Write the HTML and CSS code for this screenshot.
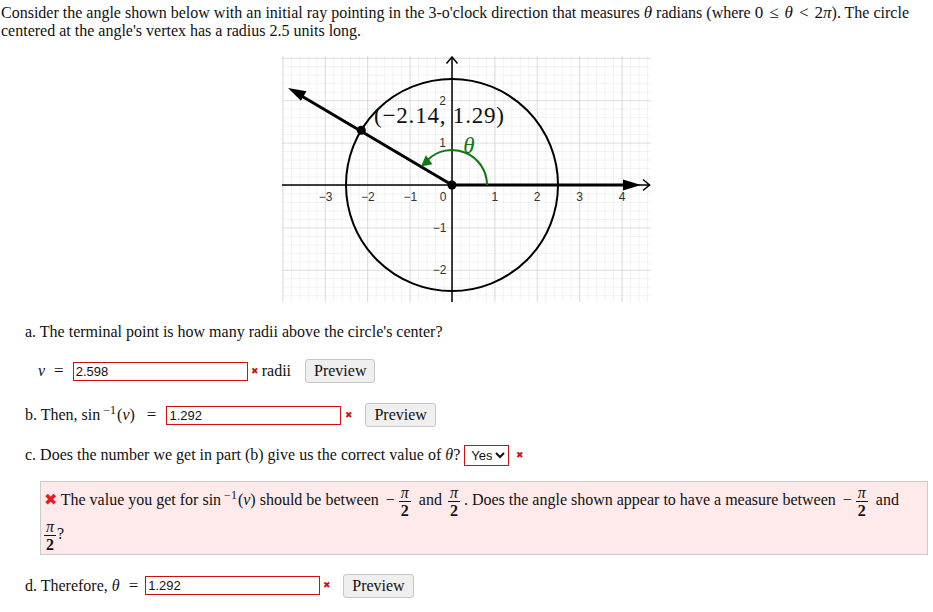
FILE: index.html
```html
<!DOCTYPE html>
<html>
<head>
<meta charset="utf-8">
<link rel="stylesheet" href="styles.css">
</head>
<body>
<p class="intro">Consider the angle shown below with an initial ray pointing in the 3-o'clock direction that measures <span class="m"><span class="mi">θ</span></span> radians (where <span class="m">0<span class="rel">≤</span><span class="mi">θ</span><span class="rel">&lt;</span>2<span class="mi">π</span></span>). The circle centered at the angle's vertex has a radius 2.5 units long.</p>

<div class="graph">
<svg width="369" height="246" viewBox="0 0 369 246" xmlns="http://www.w3.org/2000/svg">
  <defs>
    <pattern id="minor" patternUnits="userSpaceOnUse" x="170" y="129" width="8.48" height="8.48">
      <path d="M0 0 H8.48 M0 0 V8.48" stroke="#e6e6e6" stroke-width="1" fill="none"/>
    </pattern>
    <pattern id="major" patternUnits="userSpaceOnUse" x="170" y="129" width="42.4" height="42.4">
      <path d="M0 0 H42.4 M0 0 V42.4" stroke="#cccccc" stroke-width="1.2" fill="none"/>
    </pattern>
  </defs>
  <rect x="0" y="0" width="369" height="246" fill="#fff"/>
  <rect x="0" y="0" width="369" height="246" fill="url(#minor)"/>
  <rect x="0" y="0" width="369" height="246" fill="url(#major)"/>
  <!-- axes -->
  <line x1="0" y1="129" x2="368" y2="129" stroke="#000" stroke-width="1.5"/>
  <path d="M361 123.5 L367.5 129 L361 134.5" stroke="#000" stroke-width="1.5" fill="none"/>
  <line x1="170" y1="246" x2="170" y2="1" stroke="#000" stroke-width="1.5"/>
  <path d="M164.5 7.5 L170 1 L175.5 7.5" stroke="#000" stroke-width="1.5" fill="none"/>
  <!-- tick labels -->
  <g font-family="Liberation Sans, Arial, sans-serif" font-size="12" fill="#333">
    <text x="43.5" y="144.5" text-anchor="middle">−3</text>
    <text x="85.9" y="144.5" text-anchor="middle">−2</text>
    <text x="128.3" y="144.5" text-anchor="middle">−1</text>
    <text x="161" y="144.5" text-anchor="middle">0</text>
    <text x="212.8" y="144.5" text-anchor="middle">1</text>
    <text x="255.2" y="144.5" text-anchor="middle">2</text>
    <text x="297.6" y="144.5" text-anchor="middle">3</text>
    <text x="340" y="144.5" text-anchor="middle">4</text>
    <text x="164" y="48.5" text-anchor="end">2</text>
    <text x="164" y="91" text-anchor="end">1</text>
    <text x="164.5" y="175.8" text-anchor="end">−1</text>
    <text x="164.5" y="218.2" text-anchor="end">−2</text>
  </g>
  <!-- circle -->
  <circle cx="170" cy="129" r="106" fill="none" stroke="#000" stroke-width="2"/>
  <!-- initial ray -->
  <line x1="170" y1="129" x2="345" y2="129" stroke="#000" stroke-width="3"/>
  <path d="M359 129 L341 123.5 L341 134.5 Z" fill="#000"/>
  <!-- terminal ray -->
  <line x1="170" y1="129" x2="20" y2="40.3" stroke="#000" stroke-width="3"/>
  <path d="M6 32 L24.5 35.2 L18.9 44.7 Z" fill="#000"/>
  <!-- points -->
  <circle cx="170" cy="129" r="4.5" fill="#000"/>
  <circle cx="79.3" cy="74.3" r="4.5" fill="#000"/>
  <!-- angle arc -->
  <path d="M205 129 A35 35 0 0 0 145.5 104" fill="none" stroke="#117711" stroke-width="2"/>
  <path d="M139 110.5 L150.5 108.3 L143.8 99.2 Z" fill="#117711"/>
  <text x="187" y="97" font-family="Liberation Serif, serif" font-style="italic" font-size="23" fill="#117711" text-anchor="middle">θ</text>
  <!-- coordinate label -->
  <text x="92" y="67" font-family="Liberation Serif, serif" font-size="23" fill="#111" textLength="130" lengthAdjust="spacing">(−2.14, 1.29)</text>
</svg>
</div>

<div class="part part-a">a. The terminal point is how many radii above the circle's center?</div>

<div class="row row-a">
  <span class="mi">v</span><span class="eq">=</span>
  <input class="ans" type="text" value="2.598">
  <span class="mark">✖</span><span class="unit">radii</span>
  <button class="preview">Preview</button>
</div>

<div class="row row-b">
  <span>b. Then, <span class="fn">sin</span><sup class="sup">−1</sup>(<span class="mi">v</span>)</span><span class="eq">=</span>
  <input class="ans" type="text" value="1.292">
  <span class="mark">✖</span>
  <button class="preview">Preview</button>
</div>

<div class="row row-c">
  <span>c. Does the number we get in part (b) give us the correct value of <span class="mi">θ</span>?</span>
  <select class="choice"><option>Yes</option><option>No</option></select>
  <span class="mark">✖</span>
</div>

<div class="feedback">
  <span class="bigx">✖</span> The value you get for <span class="fn">sin</span><sup class="sup">−1</sup>(<span class="mi">v</span>) should be between <span class="neg">−</span><span class="frac"><span class="num mi">π</span><span class="den">2</span></span> and <span class="frac"><span class="num mi">π</span><span class="den">2</span></span>. Does the angle shown appear to have a measure between <span class="neg">−</span><span class="frac"><span class="num mi">π</span><span class="den">2</span></span> and <span class="nw"><span class="frac first"><span class="num mi">π</span><span class="den">2</span></span>?</span>
</div>

<div class="row row-d">
  <span>d. Therefore, <span class="mi">θ</span></span><span class="eq">=</span>
  <input class="ans" type="text" value="1.292">
  <span class="mark">✖</span>
  <button class="preview">Preview</button>
</div>
</body>
</html>
```

FILE: styles.css
```css
body {
  margin: 0;
  font-family: "Liberation Serif", "Times New Roman", serif;
  font-size: 16px;
  color: #111;
  background: #fff;
}

.intro {
  margin: 0;
  padding: 4px 10px 0 1px;
  line-height: 18px;
}

.m {
  font-size: 17px;
}

.rel {
  margin: 0 6px;
}

.mi {
  font-style: italic;
}

.fn {
  font-style: normal;
}

.sup {
  font-size: 12px;
  vertical-align: 6px;
  line-height: 0;
  margin-left: 3px;
  margin-right: 1px;
}

.graph {
  display: flex;
  justify-content: center;
  margin-top: 16px;
}

.graph svg {
  display: block;
}

.part {
  padding-left: 25px;
  line-height: 18px;
}

.part-a {
  margin-top: 21px;
}

.row {
  display: flex;
  align-items: center;
  height: 24px;
  white-space: nowrap;
}

.row-a {
  margin-top: 18px;
  padding-left: 38px;
}

.row-b {
  margin-top: 20px;
  padding-left: 25px;
}

.row-c {
  margin-top: 17px;
  padding-left: 25px;
  height: 22px;
}

.row-d {
  margin-top: 19px;
  padding-left: 25px;
}

.eq {
  margin: 0 7px 0 9px;
  font-size: 17px;
}

.row-a .eq {
  margin-right: 9px;
}

.row-b .eq {
  margin: 0 10px 0 12px;
}

.ans {
  width: 175px;
  height: 19px;
  flex: none;
  box-sizing: border-box;
  border: 1px solid #cc1111;
  padding: 0 2px;
  font-family: "Liberation Sans", Arial, sans-serif;
  font-size: 13px;
  color: #111;
  margin: 0;
  outline: none;
}

.mark {
  color: #cc1111;
  font-size: 9px;
  margin: 0 3px 0 3px;
  line-height: 1;
}

.unit {
  margin-right: 14px;
}

.row-b .mark {
  margin: 0 12px 0 4px;
}

.row-d .mark {
  margin: 0 12px 0 3px;
}

.preview {
  height: 24px;
  box-sizing: border-box;
  padding: 0 8px;
  background: #efefef;
  border: 1px solid #c6c6c6;
  border-radius: 3px;
  font-family: "Liberation Serif", "Times New Roman", serif;
  font-size: 16px;
  color: #111;
  margin: 0;
}

.choice {
  margin-left: 4px;
  height: 21px;
  width: 45px;
  border: 1px solid #cc1111;
  border-radius: 0;
  font-family: "Liberation Sans", Arial, sans-serif;
  font-size: 13px;
  padding: 0 0 0 2px;
  background: #fff;
  color: #111;
}

.row-c .mark {
  margin-left: 7px;
}

.feedback {
  margin: 15px 5px 0 40px;
  width: 888px;
  box-sizing: border-box;
  padding: 2px 6px 2px 3px;
  background: #feeaea;
  border: 1px solid #cccccc;
  line-height: 32px;
}

.bigx {
  color: #e81b1b;
  font-size: 16px;
}

.neg {
  margin: 0 2px 0 3px;
}

.nw {
  white-space: nowrap;
}

.frac {
  display: inline-flex;
  flex-direction: column;
  align-items: stretch;
  vertical-align: middle;
  text-align: center;
  line-height: 15px;
  font-size: 16px;
  margin: 0 4px 0 2px;
}

.frac.first {
  margin: 0 1px 0 0;
}

.frac .num {
  border-bottom: 1px solid #111;
  padding: 0 2px 1px;
}

.frac .den {
  padding-top: 1px;
  font-weight: bold;
}
```
